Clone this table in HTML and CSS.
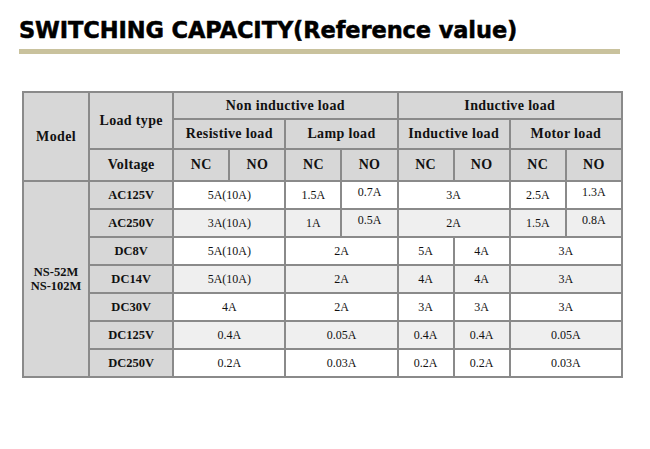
FILE: index.html
```html
<!DOCTYPE html>
<html>
<head>
<meta charset="utf-8">
<link rel="stylesheet" href="styles.css">
</head>
<body>
<div class="page">
  <h1 class="title">SWITCHING CAPACITY(Reference value)</h1>
  <div class="rule"></div>
  <table class="cap">
    <colgroup>
      <col class="c-model"><col class="c-type">
      <col class="c-v"><col class="c-v"><col class="c-v"><col class="c-v">
      <col class="c-v"><col class="c-v"><col class="c-v"><col class="c-v">
    </colgroup>
    <tr class="h1">
      <th rowspan="3" class="hd">Model</th>
      <th rowspan="2" class="hd">Load type</th>
      <th colspan="4" class="hd">Non inductive load</th>
      <th colspan="4" class="hd">Inductive load</th>
    </tr>
    <tr class="h2">
      <th colspan="2" class="hd">Resistive load</th>
      <th colspan="2" class="hd">Lamp load</th>
      <th colspan="2" class="hd">Inductive load</th>
      <th colspan="2" class="hd">Motor load</th>
    </tr>
    <tr class="h3">
      <th class="hd">Voltage</th>
      <th class="hd">NC</th><th class="hd">NO</th><th class="hd">NC</th><th class="hd">NO</th>
      <th class="hd">NC</th><th class="hd">NO</th><th class="hd">NC</th><th class="hd">NO</th>
    </tr>
    <tr class="odd">
      <th rowspan="7" class="model">NS-52M<br>NS-102M</th>
      <th class="volt">AC125V</th>
      <td colspan="2">5A(10A)</td>
      <td>1.5A</td><td class="hi">0.7A</td>
      <td colspan="2">3A</td>
      <td>2.5A</td><td class="hi">1.3A</td>
    </tr>
    <tr class="even">
      <th class="volt">AC250V</th>
      <td colspan="2">3A(10A)</td>
      <td>1A</td><td class="hi">0.5A</td>
      <td colspan="2">2A</td>
      <td>1.5A</td><td class="hi">0.8A</td>
    </tr>
    <tr class="odd">
      <th class="volt">DC8V</th>
      <td colspan="2">5A(10A)</td>
      <td colspan="2">2A</td>
      <td>5A</td><td>4A</td>
      <td colspan="2">3A</td>
    </tr>
    <tr class="even">
      <th class="volt">DC14V</th>
      <td colspan="2">5A(10A)</td>
      <td colspan="2">2A</td>
      <td>4A</td><td>4A</td>
      <td colspan="2">3A</td>
    </tr>
    <tr class="odd">
      <th class="volt">DC30V</th>
      <td colspan="2">4A</td>
      <td colspan="2">2A</td>
      <td>3A</td><td>3A</td>
      <td colspan="2">3A</td>
    </tr>
    <tr class="even">
      <th class="volt">DC125V</th>
      <td colspan="2">0.4A</td>
      <td colspan="2">0.05A</td>
      <td>0.4A</td><td>0.4A</td>
      <td colspan="2">0.05A</td>
    </tr>
    <tr class="odd">
      <th class="volt">DC250V</th>
      <td colspan="2">0.2A</td>
      <td colspan="2">0.03A</td>
      <td>0.2A</td><td>0.2A</td>
      <td colspan="2">0.03A</td>
    </tr>
  </table>
</div>
</body>
</html>
```

FILE: styles.css
```css
html, body {
  margin: 0;
  padding: 0;
  background: #ffffff;
}

.page {
  width: 650px;
  height: 449px;
  padding-top: 17px;
  box-sizing: border-box;
}

.title {
  margin: 0 0 0 19px;
  font-family: "DejaVu Sans", "Liberation Sans", sans-serif;
  font-weight: 700;
  font-size: 22.5px;
  line-height: 26px;
  color: #000;
  -webkit-text-stroke: 0.5px #000;
  letter-spacing: -0.1px;
}

.rule {
  margin: 6px 0 0 19px;
  width: 601px;
  height: 5px;
  background: #c9c29d;
}

.cap {
  margin: 37px 0 0 22px;
  border-collapse: collapse;
  table-layout: fixed;
  width: 601px;
  font-family: "Liberation Serif", "Times New Roman", serif;
  color: #111;
}

.c-model { width: 66px; }
.c-type { width: 84px; }
.c-v { width: 56px; }

.cap th, .cap td {
  border: 2px solid #8a8a8a;
  text-align: center;
  vertical-align: middle;
  padding: 0;
  overflow: hidden;
  white-space: nowrap;
}

.cap th {
  background: #d7d7d7;
  font-weight: 700;
}

.hd {
  font-size: 14px;
  letter-spacing: 0.35px;
}

.h1 th { height: 25px; }
.h2 th { height: 28px; }
.h3 th { height: 30px; }

.volt {
  font-size: 12.5px;
  height: 26px;
}

.cap td {
  font-size: 12px;
  height: 26px;
}

.odd td { background: #ffffff; }
.even td { background: #efefef; }

.cap td.hi {
  vertical-align: top;
  padding-top: 3px;
  height: 23px;
}

.model {
  font-size: 12.5px;
  line-height: 14px;
}
```
